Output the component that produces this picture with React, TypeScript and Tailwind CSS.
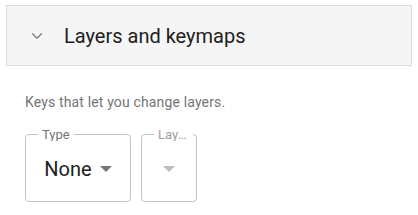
import { ChevronDown } from "lucide-react";

function Caret({ muted }: { muted?: boolean }) {
  return (
    <svg width="12" height="6" viewBox="0 0 10 5" className="shrink-0">
      <path d="M0 0 L5 5 L10 0 Z" fill={muted ? "#bdbdbd" : "#757575"} />
    </svg>
  );
}

function OutlinedSelect({
  label,
  value,
  width,
  disabled,
}: {
  label: string;
  value?: string;
  width: string;
  disabled?: boolean;
}) {
  return (
    <div className={`relative h-[68px] ${width}`}>
      <fieldset className="absolute inset-x-0 bottom-0 -top-[6px] rounded-[4px] border border-[#c4c4c4] pl-[12px] pr-[3px] pointer-events-none min-w-0">
        <legend
          className={`px-[4px] text-[13px] leading-[13px] truncate max-w-full ${
            disabled ? "text-[#9e9e9e]" : "text-[#757575]"
          }`}
        >
          {label}
        </legend>
      </fieldset>
      <div className="relative flex h-full items-center justify-center gap-[8px] pt-[2px]">
        {value && (
          <span className="text-[20px] text-[#212121]">{value}</span>
        )}
        <Caret muted={disabled} />
      </div>
    </div>
  );
}

export default function App() {
  return (
    <div
      className="bg-white w-[418px] h-[215px] pt-[5px] px-[6px]"
      style={{ fontFamily: "Roboto, 'Liberation Sans', sans-serif" }}
    >
      <div className="flex items-center h-[61px] bg-[#f5f5f5] border border-[#dcdcdc] pl-[21px]">
        <ChevronDown className="h-[18px] w-[18px] text-[#757575]" strokeWidth={1.5} />
        <span className="ml-[18px] text-[20px] text-[#212121]">Layers and keymaps</span>
      </div>
      <div className="pl-[19px] pt-[26px]">
        <p className="text-[14px] leading-[20px] text-[#757575] tracking-[0.15px]">
          Keys that let you change layers.
        </p>
        <div className="flex gap-[10px] mt-[22px]">
          <OutlinedSelect label="Type" value="None" width="w-[106px]" />
          <OutlinedSelect label="Layer" width="w-[56px]" disabled />
        </div>
      </div>
    </div>
  );
}
